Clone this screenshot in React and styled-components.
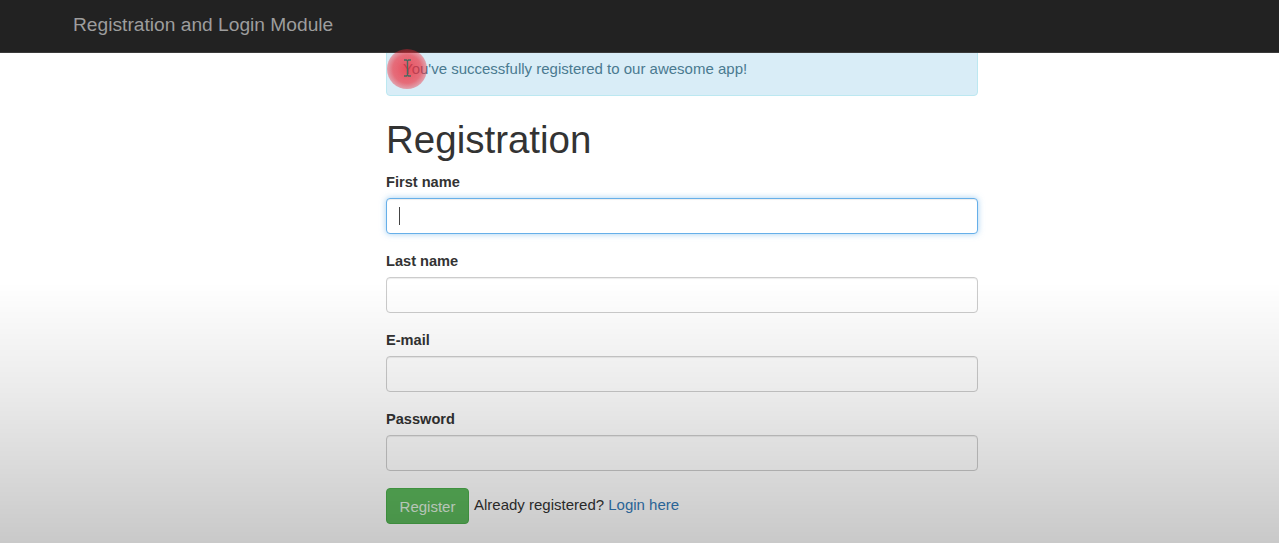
import React from "react";
import styled, { createGlobalStyle } from "styled-components";

const GlobalStyle = createGlobalStyle`
  * { box-sizing: border-box; }
  html, body {
    margin: 0;
    padding: 0;
    background: #fff;
    font-family: "Liberation Sans", Helvetica, Arial, sans-serif;
    color: #333;
    overflow: hidden;
  }
`;

const Navbar = styled.header`
  position: fixed;
  top: 0;
  left: 0;
  right: 0;
  height: 53px;
  background-color: #222;
  border-bottom: 1px solid #3a3a3a;
  display: flex;
  align-items: center;
  padding-left: 73px;
  z-index: 10;
`;

const Brand = styled.a`
  color: #9d9d9d;
  font-size: 19.2px;
  line-height: 21px;
  text-decoration: none;
  margin-top: -3px;
`;

const Page = styled.main`
  display: grid;
  grid-template-columns: 386px 592px 1fr;
  padding-top: 41px;
  min-height: 543px;
`;

const Column = styled.div`
  grid-column: 2;
`;

const Alert = styled.div`
  background-color: #d9edf7;
  border: 1px solid #bce8f1;
  color: #4a7a90;
  border-radius: 4px;
  padding: 16px;
  font-size: 15px;
  line-height: 21px;
  margin-bottom: 22px;
`;

const Title = styled.h1`
  font-size: 38.5px;
  font-weight: 400;
  line-height: 43px;
  margin: 0 0 11px;
  color: #333;
`;

const FormGroup = styled.div`
  margin-bottom: 17px;
`;

const Label = styled.label`
  display: block;
  font-size: 14.6px;
  font-weight: 700;
  line-height: 21px;
  margin-bottom: 5px;
  color: #333;
`;

const InputWrap = styled.div`
  position: relative;
`;

const Input = styled.input`
  display: block;
  width: 100%;
  height: 36px;
  padding: 6px 13px;
  font-size: 15px;
  font-family: inherit;
  color: #555;
  background-color: #fff;
  border: 1px solid ${({ $focused }) => ($focused ? "#66afe9" : "#ccc")};
  border-radius: 4px;
  box-shadow: ${({ $focused }) =>
    $focused
      ? "inset 0 1px 1px rgba(0,0,0,.075), 0 0 6px rgba(102,175,233,.6)"
      : "inset 0 1px 1px rgba(0,0,0,.075)"};
  outline: none;
  caret-color: transparent;
`;

const Caret = styled.span`
  position: absolute;
  left: 13px;
  top: 9px;
  width: 1px;
  height: 18px;
  background: #444;
`;

const Actions = styled.div`
  display: flex;
  align-items: center;
  gap: 5px;
  font-size: 15px;
  line-height: 21px;
`;

const Button = styled.button`
  height: 36px;
  width: 83px;
  padding: 6px 12px;
  font-family: inherit;
  font-size: 15px;
  color: rgba(255, 255, 255, 0.82);
  background-color: #5cb85c;
  border: 1px solid #4cae4c;
  border-radius: 4px;
  cursor: pointer;
`;

const Hint = styled.span`
  margin-top: -3px;
`;

const LinkText = styled.a`
  color: #337ab7;
  text-decoration: none;
`;

const Shade = styled.div`
  position: fixed;
  inset: 0;
  pointer-events: none;
  background: linear-gradient(
    to bottom,
    rgba(0, 0, 0, 0) 0%,
    rgba(0, 0, 0, 0) 52%,
    rgba(0, 0, 0, 0.08) 72%,
    rgba(0, 0, 0, 0.21) 100%
  );
  z-index: 20;
`;

const ClickMark = styled.div`
  position: fixed;
  left: 387px;
  top: 49px;
  width: 40px;
  height: 40px;
  border-radius: 50%;
  background: radial-gradient(
    circle,
    rgba(236, 40, 55, 0.8) 0%,
    rgba(236, 40, 55, 0.65) 50%,
    rgba(236, 40, 55, 0) 100%
  );
  pointer-events: none;
  z-index: 21;
`;

const Cursor = styled.svg`
  position: fixed;
  left: 403px;
  top: 59px;
  pointer-events: none;
  z-index: 22;
`;

const fields = [
  { label: "First name", type: "text", focused: true },
  { label: "Last name", type: "text" },
  { label: "E-mail", type: "email" },
  { label: "Password", type: "password" },
];

export default function App() {
  return (
    <>
      <GlobalStyle />
      <Navbar>
        <Brand href="#">Registration and Login Module</Brand>
      </Navbar>
      <Page>
        <Column>
          <Alert>You've successfully registered to our awesome app!</Alert>
          <Title>Registration</Title>
          <form onSubmit={(e) => e.preventDefault()}>
            {fields.map((f) => (
              <FormGroup key={f.label}>
                <Label>{f.label}</Label>
                <InputWrap>
                  <Input type={f.type} $focused={f.focused} />
                  {f.focused && <Caret />}
                </InputWrap>
              </FormGroup>
            ))}
            <Actions>
              <Button type="submit">Register</Button>
              <Hint>
                Already registered? <LinkText href="#">Login here</LinkText>
              </Hint>
            </Actions>
          </form>
        </Column>
      </Page>
      <Shade />
      <ClickMark />
      <Cursor width="9" height="18" viewBox="0 0 9 18">
        <path
          d="M1 1h2.5L4.5 2 5.5 1H8M4.5 2v14M1 17h2.5l1-1 1 1H8"
          fill="none"
          stroke="#4a6a60"
          strokeWidth="1.4"
        />
      </Cursor>
    </>
  );
}
